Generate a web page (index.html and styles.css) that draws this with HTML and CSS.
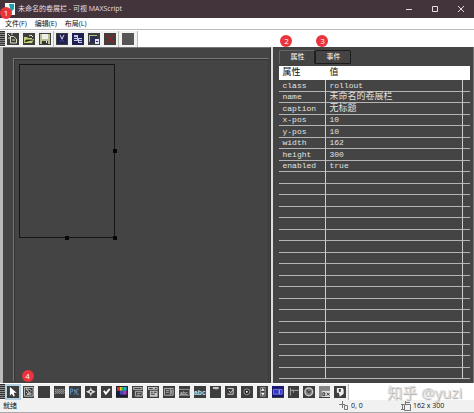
FILE: index.html
```html
<!DOCTYPE html>
<html lang="zh-CN">
<head>
<meta charset="utf-8">
<title>未命名的卷展栏 - 可视 MAXScript</title>
<link rel="stylesheet" href="styles.css">
</head>
<body>
<div class="window">
  <header class="titlebar">
    <svg class="app-icon" viewBox="0 0 12 12"><path fill="#f4fafa" d="M1 0h10v12H1z"/><path fill="#16a3a8" d="M5 1h5v5l-3 3z"/></svg>
    <h1>未命名的卷展栏 - 可视 MAXScript</h1>
    <div class="window-buttons">
      <button aria-label="最小化"><svg viewBox="0 0 8 8"><path d="M1 4.500h6"/></svg></button>
      <button aria-label="最大化"><svg viewBox="0 0 8 8"><path d="M1.500 1.500h5v5h-5z"/></svg></button>
      <button aria-label="关闭"><svg viewBox="0 0 8 8"><path d="M1 1l6 6M7 1L1 7"/></svg></button>
    </div>
    <span class="badge badge-window">1</span>
  </header>
  <nav class="menu">
    <button>文件(F)</button><button>编辑(E)</button><button>布局(L)</button>
  </nav>
  <div class="toolbar">
    <span class="grip"></span>
    <div class="tools">
      <button aria-label="新建"><svg viewBox="0 0 12 12"><path fill="none" stroke="#d6dcc2" d="M3.500 3v7h6V6L6.500 3.500h-3M1 1l2 2M1 5h2M5 0v2M5 7h3"/></svg></button>
      <button aria-label="打开"><svg viewBox="0 0 12 12"><path fill="#c8cf7a" d="M1 4h3l1 1h4v1h2L9 10H1z"/><path fill="none" stroke="#e6e9bd" d="M6 3l2-1 2 2"/><path stroke="#45491f" d="M2 9l1-2h7"/></svg></button>
      <button aria-label="保存"><svg viewBox="0 0 12 12"><path fill="#b9bf91" d="M1 1h10v10H1z"/><path fill="#f0f0e8" d="M3 1h6v5H3z"/><path fill="#33372d" d="M3 8h6v3H3z"/><path fill="#eee" d="M7 8h1v2H7z"/></svg></button>
    </div>
    <div class="tools">
      <button aria-label="剪切"><svg viewBox="0 0 12 12"><path fill="#20204f" d="M1 1h10v10H1z"/><path fill="none" stroke="#d9daf2" d="M4 2l2 4 2-4"/><path fill="none" stroke="#494cad" d="M6 6L4 9M6 6l2 3"/></svg></button>
      <button aria-label="复制"><svg viewBox="0 0 12 12"><path fill="#20204f" d="M0 0h12v12H0z"/><path fill="#c8c9e8" d="M2 2h4v6H2zM6 5h4v5H6z"/><path stroke="#292b69" d="M2 4.500h3M2 6.500h3M7 6.500h3M7 8.500h3"/></svg></button>
      <button aria-label="粘贴"><svg viewBox="0 0 12 12"><path fill="#b9bd7b" d="M1 2h8v7H1z"/><path fill="#292d50" d="M2 3h7v7H2z"/><path fill="#dfe0f3" d="M7 6h4v5H7z"/><path stroke="#292b69" d="M8 8.500h2"/></svg></button>
      <button aria-label="删除"><svg viewBox="0 0 12 12"><path stroke="#8f2026" stroke-width="1.500" d="M2 2l8 8M10 2l-8 8"/></svg></button>
    </div>
    <div class="tools tools-last">
      <button class="blank" aria-label="属性"></button>
    </div>
  </div>
  <main class="workspace">
    <section class="canvas" aria-label="卷展栏">
      <div class="page">
        <div class="rollout"><i class="handle handle-e"></i><i class="handle handle-s"></i><i class="handle handle-se"></i></div>
      </div>
    </section>
    <aside class="inspector">
      <div class="tabs">
        <button class="active">属性<span class="badge">2</span></button><button>事件<span class="badge">3</span></button>
      </div>
      <table>
        <colgroup><col class="key"><col><col class="end"></colgroup>
        <thead><tr><th>属性</th><th>值</th><th></th></tr></thead>
        <tbody>
          <tr><td>class</td><td>rollout</td><td></td></tr>
          <tr><td>name</td><td class="cjk">未命名的卷展栏</td><td></td></tr>
          <tr><td>caption</td><td class="cjk">无标题</td><td></td></tr>
          <tr><td>x-pos</td><td>10</td><td></td></tr>
          <tr><td>y-pos</td><td>10</td><td></td></tr>
          <tr><td>width</td><td>162</td><td></td></tr>
          <tr><td>height</td><td>300</td><td></td></tr>
          <tr><td>enabled</td><td>true</td><td></td></tr>
          <tr><td></td><td></td><td></td></tr>
          <tr><td></td><td></td><td></td></tr>
          <tr><td></td><td></td><td></td></tr>
          <tr><td></td><td></td><td></td></tr>
          <tr><td></td><td></td><td></td></tr>
          <tr><td></td><td></td><td></td></tr>
          <tr><td></td><td></td><td></td></tr>
          <tr><td></td><td></td><td></td></tr>
          <tr><td></td><td></td><td></td></tr>
          <tr><td></td><td></td><td></td></tr>
          <tr><td></td><td></td><td></td></tr>
          <tr><td></td><td></td><td></td></tr>
          <tr><td></td><td></td><td></td></tr>
          <tr><td></td><td></td><td></td></tr>
          <tr><td></td><td></td><td></td></tr>
          <tr><td></td><td></td><td></td></tr>
          <tr><td></td><td></td><td></td></tr>
          <tr><td></td><td></td><td></td></tr>
        </tbody>
      </table>
    </aside>
  </main>
  <div class="controls">
    <span class="grip"></span>
    <div class="palette">
      <button class="selected" aria-label="选择"><svg viewBox="0 0 12 12"><path fill="#fff" d="M3 1v9l2-2 2 3 1-1-1-3h3z"/></svg></button>
      <button aria-label="自定义"><svg viewBox="0 0 12 12"><path fill="none" stroke="#c6c6c6" d="M1.500 1.500h9v9h-9zM3 4l3-1 3 2M3 6l2 2 3-2M4 9l5-1M3 2l5 7"/></svg><span class="badge">4</span></button>
      <button aria-label="位图"></button>
      <button aria-label="分组框"><svg viewBox="0 0 12 12"><path stroke="#c8c8c8" stroke-dasharray="1 1" d="M1 3.500h10M1 5.500h10M1 7.500h10"/><path stroke="#aaa" stroke-dasharray="1 1" d="M2 4.500h9M2 6.500h9"/></svg></button>
      <button aria-label="图像"><svg viewBox="0 0 12 12"><path fill="none" stroke="#5790bd" d="M1.500 9V3h2v3h-2M5 3l2 3-2 3M10 3.500H8v5h2"/><path stroke="#bd9d68" d="M5 5h2"/></svg></button>
      <button aria-label="拾取"><svg viewBox="0 0 12 12"><path fill="#ddd" d="M6 1l1 3 4 2-4 2-1 3-1-3-4-2 4-2z"/><circle cx="6" cy="6" r="1" fill="#333"/></svg></button>
      <button aria-label="检查"><svg viewBox="0 0 12 12"><path fill="none" stroke="#fff" stroke-width="2" d="M3 5l2 3 4-5"/></svg></button>
      <button aria-label="颜色"><svg viewBox="0 0 12 12"><path fill="#1c1c30" d="M0 0h12v12H0z"/><path fill="#d43333" d="M1 1h3v4H1z"/><path fill="#e1cf34" d="M4 1h2v4H4z"/><path fill="#44bd50" d="M6 1h2v4H6z"/><path fill="#20b8c3" d="M8 1h3v4H8z"/><path fill="#3546d1" d="M4 5h3v4H4z"/><path fill="#a039ae" d="M7 5h4v4H7z"/></svg></button>
      <button aria-label="组合框"><svg viewBox="0 0 12 12"><path fill="none" stroke="#bbb" d="M1.500 1.500h9v2h-9zM3.500 5.500h7v5h-7zM5 7.500h4M5 9.500h3"/></svg></button>
      <button aria-label="下拉列表"><svg viewBox="0 0 12 12"><path fill="#c9c9c9" d="M1 1h10v3H1zM3 5h8v6H3z"/><path stroke="#333" d="M2 2.500h4M8 2.500h2M4 6.500h2M7 6.500h3M4 8.500h4"/></svg></button>
      <button aria-label="列表框"><svg viewBox="0 0 12 12"><path fill="none" stroke="#bbb" d="M1.500 2.500h9v7h-9zM7.500 3v6M3 4.500h3M3 6.500h3M9 4v4"/></svg></button>
      <button aria-label="编辑框"><svg viewBox="0 0 12 12"><path fill="none" stroke="#999" d="M0 3.500h11v6H0"/><text class="tiny" x="1" y="9">abc</text></svg></button>
      <button aria-label="标签"><svg viewBox="0 0 12 12"><text class="label" x="0" y="9">abc</text></svg></button>
      <button aria-label="组"><svg viewBox="0 0 12 12"><path fill="#ccc" d="M3 1h6v2H3z"/><path fill="#777" d="M5 3h3v1H5z"/></svg></button>
      <button aria-label="复选框"><svg viewBox="0 0 12 12"><path fill="none" stroke="#ccc" d="M2.500 2.500h6v6h-6M4 5l2 2 3-4"/></svg></button>
      <button aria-label="单选按钮"><svg viewBox="0 0 12 12"><circle cx="6" cy="6" r="3" fill="#222" stroke="#999"/><circle cx="6" cy="6" r="1" fill="#fff"/></svg></button>
      <button aria-label="微调器"><svg viewBox="0 0 12 12"><path fill="none" stroke="#999" d="M3.500 1.500h5v9h-5z"/><path fill="#fff" d="M4 5l2-3 2 3zM4 7h4l-2 3z"/></svg></button>
      <button aria-label="进度条"><svg viewBox="0 0 12 12"><path fill="#17176d" d="M0 0h12v12H0z"/><path fill="#3535cb" stroke="#7b7ed0" d="M1.500 3.500h9v5h-9z"/><path stroke="#d5d5f2" d="M7.500 4v4"/></svg></button>
      <button aria-label="滑块"><svg viewBox="0 0 12 12"><path fill="none" stroke="#aaa" d="M2.500 2v8M3 4.500h8M5.500 4v3"/></svg></button>
      <button aria-label="计时器"><svg viewBox="0 0 12 12"><circle cx="6" cy="6" r="4" fill="#777" stroke="#c3c3c3" stroke-width="1.500"/><path fill="none" stroke="#222" d="M4 4l2 3 2-2"/></svg></button>
      <button aria-label="ActiveX"><svg viewBox="0 0 12 12"><path fill="#858585" d="M0 0h12v12H0z"/><path fill="#ddd" d="M3 5h9v7H3z"/><path fill="none" stroke="#333" d="M4 10V7h2v3H4M8 7l3 3M11 7l-3 3"/></svg></button>
      <button aria-label="其他"><svg viewBox="0 0 12 12"><path fill="#eee" d="M3 2h6l1 2v4l-4 3-1-4H3z"/><path fill="#333" d="M5 3h2v3H5z"/></svg></button>
    </div>
    <span class="watermark">知乎 @yuzi</span>
  </div>
  <footer class="status">
    <span class="ready">就绪</span>
    <span class="position"><svg viewBox="0 0 10 10"><path d="M3.500 0v7M0 3.500h6M5.500 4.500h3v4h-3z"/></svg>0, 0</span>
    <span class="size"><svg viewBox="0 0 10 10"><path d="M3.500 3.500h6v6h-6zM1.500 3v6M0 3.500h3M0 8.500h3M4 1.500h5M4.500 0v3"/></svg>162 x 300</span>
  </footer>
</div>
</body>
</html>
```
FILE: styles.css
```css
* { box-sizing: border-box; }

body {
  margin: 0;
  font: 7px/12px "Open Sans", "Noto Sans CJK SC", sans-serif;
  color: #111;
}

button {
  margin: 0;
  padding: 0;
  border: 0;
  background: none;
  color: inherit;
  font: inherit;
}

svg { display: block; }

.window {
  display: flex;
  flex-direction: column;
  min-height: 100vh;
  background: #f1f1f1;
  border-bottom: 1px solid #aaa;
}

.titlebar {
  position: relative;
  display: flex;
  align-items: center;
  height: 18px;
  padding-left: 4px;
  background: #42343a;
  color: #e6dfe2;
}

.app-icon { width: 12px; height: 12px; }

h1 {
  flex: 1;
  margin: 0 0 0 2px;
  font-size: 7px;
  font-weight: 400;
}

.window-buttons { display: flex; }

.window-buttons button {
  display: grid;
  place-items: center;
  width: 26px;
  height: 18px;
}

.window-buttons svg {
  width: 8px;
  height: 8px;
  fill: none;
  stroke: #e5dde0;
}

.badge {
  position: absolute;
  width: 12px;
  height: 12px;
  border-radius: 50%;
  background: #e9333d;
  color: #fff;
  font: 8px/12px "Open Sans", sans-serif;
  text-align: center;
}

.badge-window { left: 0; top: 7px; }

.menu {
  display: flex;
  gap: 8px;
  height: 12px;
  padding-left: 5px;
  border-bottom: 1px solid #bbb;
  background: #fff;
}

.menu button { line-height: 11px; }

.toolbar, .controls {
  display: flex;
  align-items: center;
  height: 17px;
  background: #fff;
}

.grip {
  align-self: stretch;
  width: 5px;
  margin: 1px 0;
  background: repeating-linear-gradient(#333 0 1px, #888 1px 2px);
}

.tools {
  display: flex;
  align-items: center;
  gap: 4px;
  height: 16px;
  padding: 0 2px;
  border-right: 1px solid #bbb;
  background: #f1f1f1;
}

.tools-last { padding: 0 3px; }

.tools button, .palette button {
  position: relative;
  width: 12px;
  height: 12px;
  background: #3c3d3d;
}

.tools .blank { background: #555; }

.workspace {
  flex: 1;
  display: flex;
  border-left: 3px solid #bbb;
  background: #444;
}

.canvas {
  flex: 1;
  padding: 10px 0 0 10px;
  border-top: 1px solid #777;
  border-right: 1px solid #333;
}

.page {
  height: 100%;
  padding: 5px;
  border: solid #777;
  border-width: 1px 0 0 1px;
  outline: 1px solid #333;
  outline-offset: -2px;
  clip-path: inset(0 2px 2px 0);
}

.rollout {
  position: relative;
  width: 96px;
  height: 174px;
  border: 1px solid #161616;
}

.handle {
  position: absolute;
  width: 4px;
  height: 4px;
  background: #080808;
}

.handle-e { right: -3px; top: 84px; }
.handle-s { left: 45px; bottom: -3px; }
.handle-se { right: -3px; bottom: -3px; }

.inspector {
  width: 43%;
  padding: 3px 3px 3px 6px;
  border-left: 2px solid #ddd;
  border-right: 1px solid #777;
}

.tabs {
  display: flex;
  align-items: flex-start;
  height: 16px;
  color: #fff;
}

.tabs button {
  position: relative;
  width: 36px;
  height: 14px;
  border: 1px solid #1c1c1c;
  border-radius: 2px 2px 0 0;
}

.tabs .active {
  border-color: #666 #222 #444 #666;
}

.tabs .badge { left: 0; top: -16px; }

table {
  width: 100%;
  border-collapse: separate;
  border-spacing: 0;
  table-layout: fixed;
  color: #e2e2e2;
  font: 8px/10px "Liberation Mono", "Noto Sans CJK SC", monospace;
}

.key { width: 47px; }
.end { width: 7px; }

th, td {
  height: 11px;
  padding: 0 3px;
  border-right: 1px solid #ccc;
  border-bottom: 1px solid #b5b5b5;
  text-align: left;
  white-space: nowrap;
}

tbody tr:nth-child(odd) td { height: 12px; }

.cjk, th { font-size: 9px; }

th {
  height: 14px;
  border-color: #fff;
  background: #fff;
  color: #111;
  font-weight: 400;
}

th:last-child, td:last-child { border-right: 0; padding: 0; }

.palette {
  display: flex;
  width: 344px;
  height: 16px;
  border-right: 1px solid #bbb;
  background: #f1f1f1;
}

.palette button {
  flex: 1;
  height: 16px;
  background: #3c3d3d;
  border: 2px solid #f1f1f1;
}

.palette .selected { border-color: #b5d1e2; }

.palette .badge { left: -1px; top: -16px; }

.tiny, .label {
  fill: #ddd;
  font: 5px "Liberation Sans", sans-serif;
}

.label { font-size: 7px; font-weight: 700; }

.watermark {
  margin-left: auto;
  padding-right: 12px;
  color: #ddd;
  font-size: 15px;
  line-height: 16px;
  text-shadow: 1px 1px 1px #aaa;
  white-space: nowrap;
}

.status {
  display: flex;
  height: 12px;
}

.ready { flex: 1; padding-left: 3px; }

.position, .size { display: flex; gap: 2px; }

.position { width: 62px; }
.size { width: 73px; }

.status svg {
  width: 10px;
  height: 10px;
  margin-top: 1px;
  fill: none;
  stroke: #777;
}
```
